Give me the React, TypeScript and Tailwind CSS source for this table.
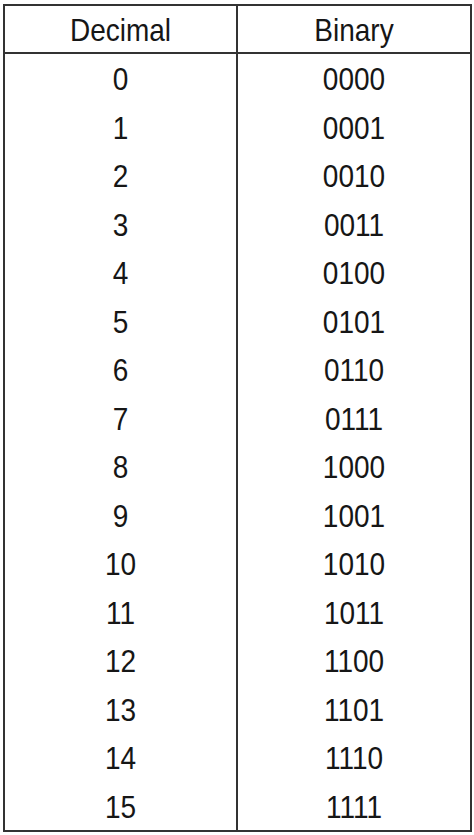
const rows = Array.from({ length: 16 }, (_, i) => ({
  dec: String(i),
  bin: i.toString(2).padStart(4, "0"),
}))

function Cell({ children, left }: { children: React.ReactNode; left?: boolean }) {
  return (
    <div
      className={
        left
          ? "h-[48.5px] pt-[4px] flex items-center justify-center border-r-2 border-[#333]"
          : "h-[48.5px] pt-[4px] flex items-center justify-center"
      }
    >
      <span className="inline-block scale-y-[1.14]">{children}</span>
    </div>
  )
}

export default function App() {
  return (
    <div className="w-[474px] h-[835px] bg-white pt-[4px] pl-[3px]">
      <div
        className="w-[469px] border-2 border-[#333] text-[28px] leading-none text-[#161616]"
        style={{ fontFamily: '"Liberation Sans", Arial, sans-serif' }}
      >
        {/* header */}
        <div className="grid grid-cols-[233px_1fr] border-b-2 border-[#333]">
          <div className="h-[46px] pt-[3px] flex items-center justify-center border-r-2 border-[#333]">
            <span className="inline-block scale-y-[1.14]">Decimal</span>
          </div>
          <div className="h-[46px] pt-[3px] flex items-center justify-center">
            <span className="inline-block scale-y-[1.14]">Binary</span>
          </div>
        </div>

        {/* rows */}
        <div className="grid grid-cols-[233px_1fr]">
          {rows.map((r) => (
            <div key={r.dec} className="contents">
              <Cell left>{r.dec}</Cell>
              <Cell>{r.bin}</Cell>
            </div>
          ))}
        </div>
      </div>
    </div>
  )
}
